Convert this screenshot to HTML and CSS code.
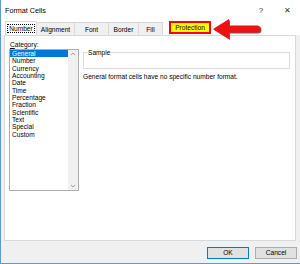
FILE: index.html
```html
<!DOCTYPE html>
<html>
<head>
<meta charset="utf-8">
<link rel="stylesheet" href="styles.css">
</head>
<body>
<div class="window">
  <div class="titlebar">
    <span class="title">Format Cells</span>
    <span class="help">?</span>
    <span class="close">&#x2715;</span>
  </div>
  <div class="tabs">
    <div class="tab active tab-number"><span class="focus">Number</span></div>
    <div class="tab tab-align">Alignment</div>
    <div class="tab tab-font">Font</div>
    <div class="tab tab-border">Border</div>
    <div class="tab tab-fill">Fill</div>
    <div class="tab highlight">Protection</div>
  </div>
  <div class="panel">
    <div class="left">
      <div class="label"><u>C</u>ategory:</div>
      <div class="listbox">
        <ul class="list">
          <li class="sel">General</li>
          <li>Number</li>
          <li>Currency</li>
          <li>Accounting</li>
          <li>Date</li>
          <li>Time</li>
          <li>Percentage</li>
          <li>Fraction</li>
          <li>Scientific</li>
          <li>Text</li>
          <li>Special</li>
          <li>Custom</li>
        </ul>
        <div class="scrollbar">
          <svg class="chev" width="10" height="8" viewBox="0 0 10 8"><path d="M3 5 L5 3 L7 5" fill="none" stroke="#a0a0a0" stroke-width="1"/></svg>
          <svg class="chev" width="10" height="8" viewBox="0 0 10 8"><path d="M3 3 L5 5 L7 3" fill="none" stroke="#a0a0a0" stroke-width="1"/></svg>
        </div>
      </div>
    </div>
    <div class="right">
      <div class="sample"><span class="legend">Sample</span></div>
      <p class="desc">General format cells have no specific number format.</p>
    </div>
  </div>
  <div class="footer">
    <button class="btn default">OK</button>
    <button class="btn">Cancel</button>
  </div>
  <svg class="arrow" width="52" height="24" viewBox="0 0 52 24">
    <path d="M2 12 L18 2 L18 8.5 L46 8.5 A3.5 3.5 0 0 1 46 15.5 L18 15.5 L18 22 Z" fill="#5a0a0a" transform="translate(1,1)" opacity="0.7"/>
    <path d="M2 12 L18 2 L18 8.5 L46 8.5 A3.5 3.5 0 0 1 46 15.5 L18 15.5 L18 22 Z" fill="#ee1111"/>
  </svg>
</div>
</body>
</html>
```
FILE: styles.css
```css
* { box-sizing: border-box; }
html, body { margin: 0; padding: 0; }
body {
  width: 300px;
  height: 264px;
  overflow: hidden;
  font-family: "Liberation Sans", Arial, sans-serif;
  font-size: 6.6px;
  color: #000;
  background: #fff;
}
.window {
  position: relative;
  width: 300px;
  height: 264px;
  background: #f0f0f0;
  border-left: 1px solid #5b9bd5;
  border-bottom: 1px solid #5b9bd5;
  display: flex;
  flex-direction: column;
}
.titlebar {
  height: 21px;
  background: #fff;
  display: flex;
  align-items: center;
  padding-left: 4px;
  font-size: 7.2px;
}
.title { flex: 1; }
.help { width: 26px; text-align: center; color: #333; font-size: 8px; }
.close { width: 26px; text-align: center; color: #333; font-size: 8px; }
.tabs {
  height: 14px;
  display: flex;
  align-items: flex-end;
  padding-left: 4px;
  background: #fff;
}
.tab {
  height: 13px;
  border: 1px solid #d9d9d9;
  border-bottom: none;
  border-left: none;
  background: #f0f0f0;
  display: flex;
  align-items: center;
  justify-content: center;
}
.tab-number { width: 32px; }
.tab-align { width: 38px; }
.tab-font { width: 34px; }
.tab-border { width: 30px; }
.tab-fill { width: 24px; }
.tab.active {
  height: 14px;
  background: #fff;
  border-left: 1px solid #d9d9d9;
}
.focus {
  border: 1px dotted #000;
  padding: 0 1px;
  line-height: 7px;
}
.tab.highlight {
  width: 42px;
  margin-left: 6px;
  height: 13px;
  margin-bottom: 1px;
  background: #ffff00;
  border: 2px solid #ff0000;
}
.panel {
  height: 206px;
  margin: 0 4px 0 3px;
  background: #fff;
  border: 1px solid #d9d9d9;
  display: flex;
  padding: 4px 4px 0 4px;
  gap: 4px;
}
.left { width: 70px; }
.label { height: 9px; line-height: 9px; padding-left: 1px; }
.listbox {
  height: 142px;
  border: 1px solid #abadb3;
  display: flex;
}
.list {
  list-style: none;
  margin: 0;
  padding: 0;
  flex: 1;
}
.list li {
  height: 7.35px;
  line-height: 7.35px;
  padding-left: 2px;
}
.list li.sel { background: #0078d7; color: #fff; }
.scrollbar {
  width: 10px;
  background: #f0f0f0;
  display: flex;
  flex-direction: column;
  justify-content: space-between;
}
.chev { display: block; }
.right { flex: 1; padding-top: 12px; padding-right: 1px; }
.sample {
  height: 17px;
  border: 1px solid #dcdcdc;
  position: relative;
}
.legend {
  position: absolute;
  left: 3px;
  top: -4px;
  background: #fff;
  padding: 0 1px;
  line-height: 8px;
}
.desc { margin: 3px 0 0 0; line-height: 9px; }
.footer {
  flex: 1;
  display: flex;
  justify-content: flex-end;
  align-items: flex-start;
  padding: 6px 3px 0 0;
  gap: 6px;
}
.btn {
  width: 42px;
  height: 12px;
  margin: 0;
  padding: 0;
  background: #e1e1e1;
  border: 1px solid #adadad;
  font-family: inherit;
  font-size: 6.6px;
  line-height: 10px;
  color: #000;
}
.btn.default { border: 1px solid #0078d7; }
.arrow {
  position: absolute;
  left: 210px;
  top: 17px;
}
```
